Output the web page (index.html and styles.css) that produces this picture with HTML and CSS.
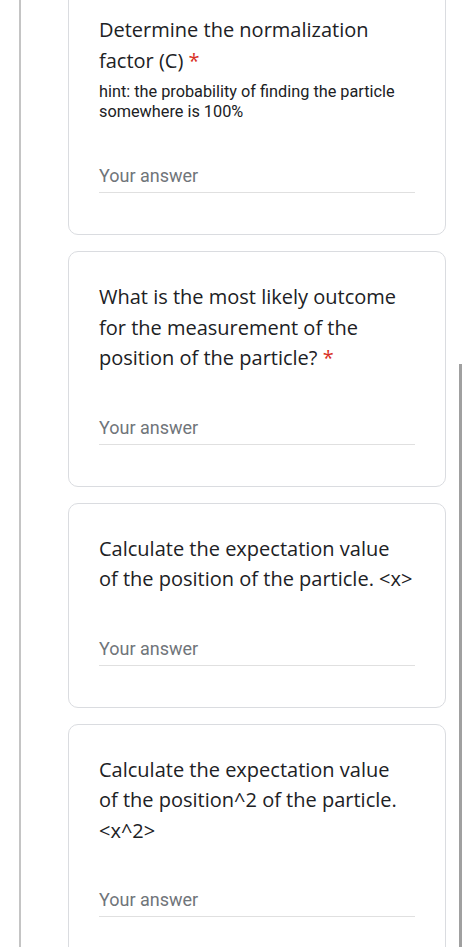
FILE: index.html
```html
<!DOCTYPE html>
<html lang="en">
<head>
<meta charset="utf-8">
<title>Form</title>
<link rel="stylesheet" href="styles.css">
</head>
<body>
<div class="frame">
  <div class="rail"></div>
  <main class="list">
    <section class="card">
      <div class="title">Determine the normalization<br>factor (C) <span class="req">*</span></div>
      <div class="hint">hint: the probability of finding the particle<br>somewhere is 100%</div>
      <div class="answer">Your answer</div>
    </section>
    <section class="card">
      <div class="title">What is the most likely outcome<br>for the measurement of the<br>position of the particle? <span class="req">*</span></div>
      <div class="answer">Your answer</div>
    </section>
    <section class="card">
      <div class="title">Calculate the expectation value<br>of the position of the particle. &lt;x&gt;</div>
      <div class="answer">Your answer</div>
    </section>
    <section class="card">
      <div class="title">Calculate the expectation value<br>of the position^2 of the particle.<br>&lt;x^2&gt;</div>
      <div class="answer">Your answer</div>
    </section>
  </main>
  <div class="scrollbar"></div>
</div>
</body>
</html>
```
FILE: styles.css
```css
html, body {
  margin: 0;
  padding: 0;
  background: #ffffff;
}
body {
  height: 947px;
  overflow: hidden;
}
.frame {
  position: relative;
  display: flex;
  height: 947px;
  overflow: hidden;
}
.rail {
  width: 2px;
  margin-left: 19px;
  background: #c4c4c4;
  flex: none;
}
.list {
  display: flex;
  flex-direction: column;
  gap: 16px;
  margin-left: 47px;
  margin-top: -16px;
  width: 378px;
  flex: none;
}
.card {
  border: 1px solid #dadce0;
  border-radius: 10px;
  padding: 30px 30px 41px 30px;
  background: #fff;
}
.title {
  font-family: "Open Sans", sans-serif;
  font-size: 20px;
  line-height: 30.5px;
  color: #202124;
  white-space: nowrap;
}
.req {
  color: #d93025;
}
.hint {
  font-family: Roboto, sans-serif;
  font-size: 16.3px;
  line-height: 20px;
  color: #202124;
  margin-top: 6px;
  white-space: nowrap;
}
.answer {
  font-family: Roboto, sans-serif;
  font-size: 18px;
  line-height: 22px;
  color: #70757a;
  margin-top: 43px;
  padding-bottom: 5px;
  border-bottom: 1px solid #e0e0e0;
}
.scrollbar {
  position: absolute;
  left: 459px;
  top: 364px;
  width: 3px;
  bottom: 0;
  background: #a0a0a0;
}
```
